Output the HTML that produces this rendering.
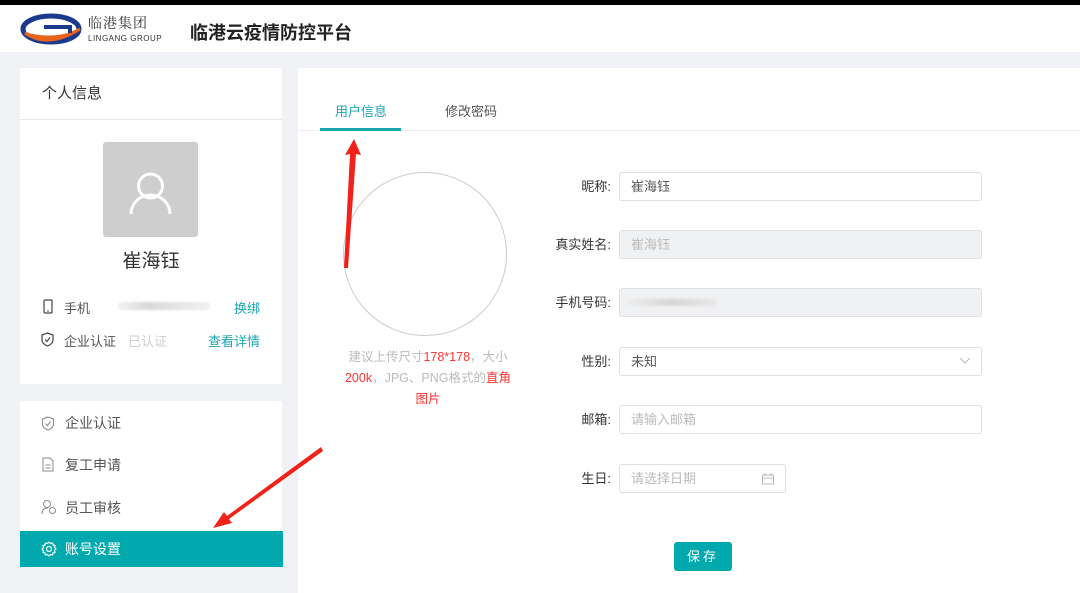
<!DOCTYPE html>
<html><head><meta charset="utf-8"><style>
*{margin:0;padding:0;box-sizing:border-box}
body{width:1080px;height:593px;overflow:hidden;background:#f0f2f5;font-family:"Liberation Sans","Noto Sans CJK SC",sans-serif;position:relative;color:#333}
.abs{position:absolute}
.top{left:0;top:0;width:1080px;height:5px;background:#000}
.hdr{left:0;top:5px;width:1080px;height:47px;background:#fff}
.card{background:#fff}
.t13{font-size:13px}
.lbl{position:absolute;font-size:13px;color:#333;text-align:right;width:80px;left:531px;line-height:29px}
.inp{position:absolute;left:619px;width:363px;height:29px;border:1px solid #dcdfe6;border-radius:3px;font-size:13px;line-height:27px;padding-left:11px;color:#555;background:#fff}
.dis{background:#f0f1f3;color:#bbb}
.ph{color:#bbb}
.mi{position:absolute;left:20px;width:263px;height:36px;font-size:14px;color:#555;line-height:36px;padding-left:45px}
</style></head><body>
<div class="abs top"></div>
<div class="abs hdr">
 <svg class="abs" style="left:20px;top:8px" width="66" height="34" viewBox="0 0 66 34">
  <ellipse cx="31" cy="16" rx="28" ry="13" fill="none" stroke="#1b3a8c" stroke-width="5"/>
  <path d="M5 20 Q28 36 60 16 Q40 28 10 22 Z" fill="#e8641e" stroke="#e8641e" stroke-width="3"/>
  <path d="M24 14 H50 V20" fill="none" stroke="#1b3a8c" stroke-width="4"/>
 </svg>
 <div class="abs" style="left:88px;top:8px;font-size:14px;color:#333;font-family:'Noto Serif CJK SC',serif;letter-spacing:1px">临港集团</div>
 <div class="abs" style="left:88px;top:29px;font-size:8px;color:#333;letter-spacing:0.5px">LINGANG GROUP</div>
 <div class="abs" style="left:190px;top:14px;font-size:18px;font-weight:bold;color:#222">临港云疫情防控平台</div>
</div>

<div class="abs card" style="left:20px;top:68px;width:262px;height:316px">
 <div style="height:52px;border-bottom:1px solid #e8e8e8;font-size:15px;line-height:52px;padding-left:22px;color:#333">个人信息</div>
 <div class="abs" style="left:83px;top:74px;width:95px;height:95px;background:#cecece;border-radius:3px">
  <svg width="95" height="95" viewBox="0 0 95 95"><circle cx="47.5" cy="44" r="12" fill="none" stroke="#fff" stroke-width="3"/><path d="M28 72 A19.5 19 0 0 1 67 72" fill="none" stroke="#fff" stroke-width="3"/></svg>
 </div>
 <div class="abs" style="left:0;width:262px;top:178px;text-align:center;font-size:19px;color:#333">崔海钰</div>
 <svg class="abs" style="left:23px;top:231px" width="10" height="15"><rect x="1" y="1" width="8" height="13" rx="1" fill="none" stroke="#444" stroke-width="1.2"/><line x1="4" y1="12" x2="6" y2="12" stroke="#444"/></svg>
 <div class="abs t13" style="left:44px;top:230px;color:#555">手机</div>
 <div class="abs" style="left:98px;top:234px;width:92px;height:8px;background:linear-gradient(90deg,#f2f2f2,#d8d8d8,#e6e6e6,#f0f0f0);filter:blur(1px)"></div>
 <div class="abs t13" style="left:214px;top:230px;color:#1aa5b0">换绑</div>
 <svg class="abs" style="left:21px;top:264px" width="13" height="15" viewBox="0 0 13 15"><path d="M6.5 1 L12 3 V8 C12 11 9 13 6.5 14 C4 13 1 11 1 8 V3 Z" fill="none" stroke="#444" stroke-width="1.2"/><path d="M4 7.5 L6 9.5 L9 5.5" fill="none" stroke="#444" stroke-width="1.2"/></svg>
 <div class="abs t13" style="left:44px;top:263px;color:#555">企业认证</div>
 <div class="abs t13" style="left:108px;top:263px;color:#ccc">已认证</div>
 <div class="abs t13" style="left:188px;top:263px;color:#1aa5b0">查看详情</div>
</div>

<div class="abs card" style="left:20px;top:401px;width:262px;height:166px"></div>
<div class="mi" style="top:405px">企业认证</div>
<svg class="abs" style="left:41px;top:416px" width="14" height="15" viewBox="0 0 13 15"><path d="M6.5 1 L12 3 V8 C12 11 9 13 6.5 14 C4 13 1 11 1 8 V3 Z" fill="none" stroke="#8a8a8a" stroke-width="1.1"/><path d="M4 7.5 L6 9.5 L9 5.5" fill="none" stroke="#8a8a8a" stroke-width="1.1"/></svg>
<div class="mi" style="top:447px">复工申请</div>
<svg class="abs" style="left:42px;top:457px" width="12" height="15"><path d="M1 1 H8 L11 4 V14 H1 Z" fill="none" stroke="#8a8a8a"/><line x1="3.5" y1="8" x2="8.5" y2="8" stroke="#8a8a8a"/><line x1="3.5" y1="11" x2="8.5" y2="11" stroke="#8a8a8a"/></svg>
<div class="mi" style="top:490px">员工审核</div>
<svg class="abs" style="left:41px;top:499px" width="16" height="16"><circle cx="6" cy="5" r="3.5" fill="none" stroke="#8a8a8a"/><path d="M1 15 C1 10 4 9 7 9" fill="none" stroke="#8a8a8a"/><circle cx="11.5" cy="11.5" r="3" fill="none" stroke="#8a8a8a"/></svg>
<div class="mi" style="top:531px;background:#00a9ad;color:#fff">账号设置</div>
<svg class="abs" style="left:41px;top:541px" width="16" height="16" viewBox="0 0 16 16"><path d="M8 1 L9.5 2.5 L11.5 2 L12 4 L14 4.5 L13.5 6.5 L15 8 L13.5 9.5 L14 11.5 L12 12 L11.5 14 L9.5 13.5 L8 15 L6.5 13.5 L4.5 14 L4 12 L2 11.5 L2.5 9.5 L1 8 L2.5 6.5 L2 4.5 L4 4 L4.5 2 L6.5 2.5 Z" fill="none" stroke="#fff" stroke-width="1.2" stroke-linejoin="round"/><circle cx="8" cy="8" r="2.5" fill="none" stroke="#fff" stroke-width="1.2"/></svg>

<div class="abs card" style="left:298px;top:68px;width:782px;height:525px">
 <div class="abs" style="left:0;top:62px;width:782px;height:1px;background:#eee"></div>
 <div class="abs" style="left:37px;top:33px;font-size:13px;color:#1aa5b0">用户信息</div>
 <div class="abs" style="left:22px;top:60px;width:81px;height:3px;background:#13a8ae"></div>
 <div class="abs" style="left:147px;top:33px;font-size:13px;color:#555">修改密码</div>
 <div class="abs" style="left:45px;top:104px;width:164px;height:164px;border:1px solid #ccc;border-radius:50%"></div>
 <div class="abs" style="left:45px;top:279px;width:170px;font-size:12.5px;line-height:21px;color:#bbb;text-align:center">建议上传尺寸<span style="color:#f33">178*178</span>，大小<br><span style="color:#f33">200k</span>，JPG、PNG格式的<span style="color:#f33">直角</span><br><span style="color:#f33">图片</span></div>
 <div class="abs" style="left:376px;top:474px;width:58px;height:29px;background:#00a9ad;border-radius:3px;color:#fff;font-size:13px;line-height:29px;text-align:center;letter-spacing:3px">保存</div>
</div>

<div class="lbl" style="top:172px">昵称:</div>
<div class="inp" style="top:172px">崔海钰</div>
<div class="lbl" style="top:230px">真实姓名:</div>
<div class="inp dis" style="top:230px">崔海钰</div>
<div class="lbl" style="top:288px">手机号码:</div>
<div class="inp dis" style="top:288px"><div style="position:absolute;left:6px;top:10px;width:90px;height:7px;background:linear-gradient(90deg,#eee,#d6d6d6,#e8e8e8);filter:blur(1px)"></div></div>
<div class="lbl" style="top:347px">性别:</div>
<div class="inp" style="top:347px">未知<svg style="position:absolute;right:10px;top:9px" width="12" height="8"><path d="M1 1 L6 6 L11 1" fill="none" stroke="#bbb"/></svg></div>
<div class="lbl" style="top:405px">邮箱:</div>
<div class="inp ph" style="top:405px">请输入邮箱</div>
<div class="lbl" style="top:464px">生日:</div>
<div class="inp ph" style="top:464px;width:167px">请选择日期<svg style="position:absolute;right:11px;top:8px" width="12" height="12"><rect x="0.5" y="2" width="11" height="9" fill="none" stroke="#bbb"/><line x1="0.5" y1="5" x2="11.5" y2="5" stroke="#bbb"/><line x1="3" y1="0" x2="3" y2="3" stroke="#bbb"/><line x1="9" y1="0" x2="9" y2="3" stroke="#bbb"/></svg></div>

<svg class="abs" style="left:0;top:0" width="1080" height="593">
 <polygon points="344,268 350,154 345,155 354,139 361,155 356,154 348,268" fill="#f0221a"/>
 <polygon points="323,451 229,519 232,523 213,528 224,512 227,516 321,447" fill="#f0221a"/>
</svg>
</body></html>
